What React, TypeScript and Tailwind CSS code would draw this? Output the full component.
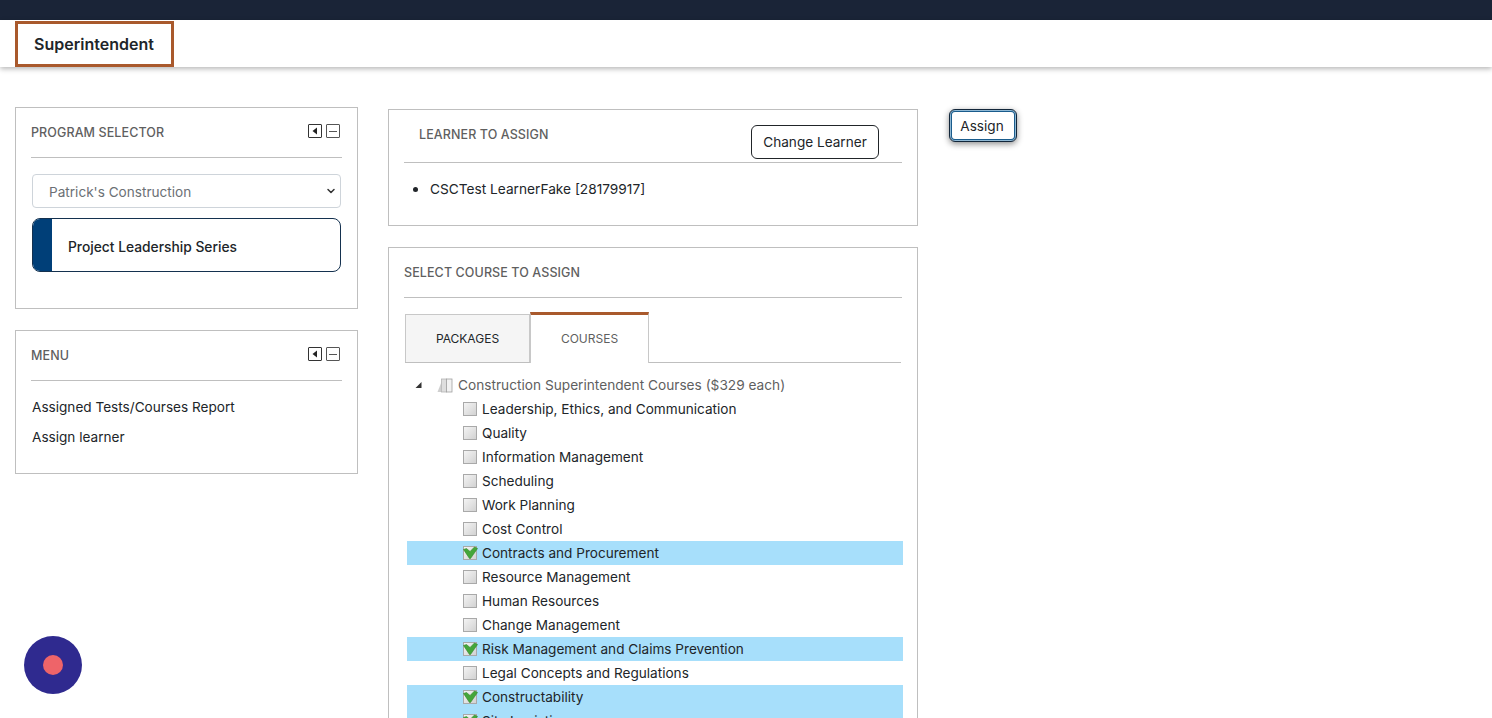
import { ChevronDown } from 'lucide-react'

const COURSES = [
  { name: 'Leadership, Ethics, and Communication' },
  { name: 'Quality' },
  { name: 'Information Management' },
  { name: 'Scheduling' },
  { name: 'Work Planning' },
  { name: 'Cost Control' },
  { name: 'Contracts and Procurement', checked: true },
  { name: 'Resource Management' },
  { name: 'Human Resources' },
  { name: 'Change Management' },
  { name: 'Risk Management and Claims Prevention', checked: true },
  { name: 'Legal Concepts and Regulations' },
  { name: 'Constructability', checked: true },
  { name: 'Site Logistics', checked: true },
]

function PanelControls() {
  return (
    <div className="mr-[2px] flex gap-[4px]">
      <span className="flex h-[14px] w-[14px] items-center justify-center rounded-[1px] border border-[#333] bg-white">
        <svg width="8" height="8" viewBox="0 0 8 8">
          <path d="M6 0.5V7.5L1.5 4Z" fill="#222" />
        </svg>
      </span>
      <span className="flex h-[14px] w-[14px] items-center justify-center rounded-[1px] border border-[#555] bg-white">
        <span className="h-px w-[8px] bg-[#555]" />
      </span>
    </div>
  )
}

function TreeCheckbox({ checked }: { checked?: boolean }) {
  return (
    <span className="relative h-[14px] w-[14px] shrink-0 border border-[#a9a9a9] bg-gradient-to-br from-[#f4f4f4] to-[#d2d2d2]">
      {checked && (
        <svg className="absolute left-[-1px] top-[-1px]" width="15" height="14" viewBox="0 0 15 14">
          <path d="M0.5 3.5L3.5 2.5L7 5.5L11.5 1L14.5 2.5L7.5 12.5H6.5Z" fill="#44a63a" stroke="#2f8a2a" strokeWidth="0.6" />
        </svg>
      )}
    </span>
  )
}

function BookIcon() {
  return (
    <svg width="16" height="15" viewBox="0 0 16 15">
      <path d="M0.5 14L4.5 4V14Z" fill="#cfcfcf" />
      <rect x="4.5" y="1" width="5" height="13" fill="#dedede" stroke="#b5b5b5" strokeWidth="0.8" />
      <rect x="9.5" y="1" width="5.5" height="13" fill="#f2f2f2" stroke="#a0a0a0" strokeWidth="0.8" />
    </svg>
  )
}

export default function App() {
  return (
    <div className="h-[718px] overflow-hidden bg-white font-['Inter',sans-serif] text-[#212529]">
      <div className="h-5 bg-[#1a2437]" />
      <header className="flex h-[47px] items-start bg-white pl-[15px] shadow-[0_2px_5px_rgba(0,0,0,0.28)]">
        <div className="mt-px flex h-[46px] w-[159px] items-center justify-center border-[3px] border-[#a9592c] pr-px text-[16px] font-semibold">
          Superintendent
        </div>
      </header>

      <main className="flex items-start pl-[15px] pt-10">
        <aside className="flex w-[343px] shrink-0 flex-col gap-[21px]">
          <section className="h-[202px] border border-[#bfbfbf] px-[15px] pt-4">
            <div className="flex h-[34px] items-start justify-between border-b border-[#bfbfbf] text-[12.5px] font-medium tracking-[0.1px] text-[#5f5f5f]">
              <span className="leading-[18px]">PROGRAM SELECTOR</span>
              <PanelControls />
            </div>
            <div className="relative mx-px mt-4 flex h-[34px] items-center rounded border border-[#ced4da] pl-4 pt-[2px] text-[13.6px] text-[#6b7075]">
              Patrick's Construction
              <ChevronDown className="absolute right-[3px] top-[10px] h-3 w-3 text-[#333]" strokeWidth={3} />
            </div>
            <div className="mx-px mt-[10px] flex h-[54px] overflow-hidden rounded-lg border border-[#14314f]">
              <span className="w-[19px] bg-[#003f78]" />
              <span className="flex items-center pl-4 pt-[4px] text-[13.8px] font-medium">Project Leadership Series</span>
            </div>
          </section>

          <section className="h-[144px] border border-[#bfbfbf] px-[15px] pt-4">
            <div className="flex h-[34px] items-start justify-between border-b border-[#bfbfbf] text-[12.5px] font-medium tracking-[0.1px] text-[#5f5f5f]">
              <span className="leading-[18px]">MENU</span>
              <PanelControls />
            </div>
            <ul className="mt-[15px] flex flex-col gap-2 pl-px text-[13.6px]">
              <li className="leading-[22px]">Assigned Tests/Courses Report</li>
              <li className="leading-[22px]">Assign learner</li>
            </ul>
          </section>
        </aside>

        <div className="ml-[30px] mt-[2px] flex w-[530px] shrink-0 flex-col gap-[21px]">
          <section className="h-[117px] border border-[#bfbfbf] px-[15px]">
            <div className="flex h-[53px] items-start justify-between border-b border-[#bfbfbf] pl-[15px] pr-[23px]">
              <span className="mt-4 text-[12.5px] font-medium leading-[18px] tracking-[0.1px] text-[#5f5f5f]">LEARNER TO ASSIGN</span>
              <button className="mt-[15px] h-[34px] w-[128px] rounded-md border border-[#212529] text-[13.6px]">Change Learner</button>
            </div>
            <ul className="mt-[14px] list-disc pl-[26px] text-[13.7px] leading-[22px] marker:text-[17px]">
              <li>CSCTest LearnerFake [28179917]</li>
            </ul>
          </section>

          <section className="border border-[#bfbfbf] px-[15px] pb-4">
            <div className="flex h-[50px] items-start border-b border-[#bfbfbf] pt-4 text-[12.5px] font-medium leading-[18px] tracking-[0.1px] text-[#5f5f5f]">
              SELECT COURSE TO ASSIGN
            </div>
            <div className="ml-px mt-[14px] flex h-[51px] w-[496px] items-end border-b border-[#bfbfbf]">
              <div className="flex h-[48px] w-[125px] items-center justify-center border border-b-0 border-[#c8c8c8] bg-[#f5f5f5] text-[12px]">
                PACKAGES
              </div>
              <div className="-mb-px flex h-[51px] w-[119px] items-center justify-center border-x border-[#c8c8c8] border-t-[3px] border-t-[#a9592c] bg-white text-[12px] text-[#5f5f5f]">
                COURSES
              </div>
            </div>
            <div className="ml-[3px] mt-[10px] w-[496px] text-[13.6px]">
              <div className="flex h-6 items-center pl-[7px] text-[#5f5f5f]">
                <svg width="8" height="8" viewBox="0 0 8 8">
                  <path d="M7.5 1V7H1.5Z" fill="#333" />
                </svg>
                <span className="ml-[15px]">
                  <BookIcon />
                </span>
                <span className="ml-[5px] text-[13.68px]">Construction Superintendent Courses ($329 each)</span>
              </div>
              {COURSES.map((course) => (
                <div
                  key={course.name}
                  className={`flex h-6 items-center gap-[5px] pl-[56px] ${course.checked ? 'bg-[#a7dffb]' : ''}`}
                >
                  <TreeCheckbox checked={course.checked} />
                  <span>{course.name}</span>
                </div>
              ))}
            </div>
          </section>
        </div>

        <button className="ml-[31px] mt-[2px] h-[33px] w-[68px] rounded-md border border-[#12263a] bg-white pr-[2px] pt-[2px] text-[13.6px] shadow-[inset_0_0_0_1px_#8fb8d4,inset_0_0_0_2px_#1a5c8c,0_2px_6px_rgba(0,0,0,0.45)]">
          Assign
        </button>
      </main>

      <div className="fixed bottom-6 left-6 flex h-[58px] w-[58px] items-center justify-center rounded-full bg-[#2f2a8f]">
        <span className="h-5 w-5 rounded-full bg-[#ee6469]" />
      </div>
    </div>
  )
}
